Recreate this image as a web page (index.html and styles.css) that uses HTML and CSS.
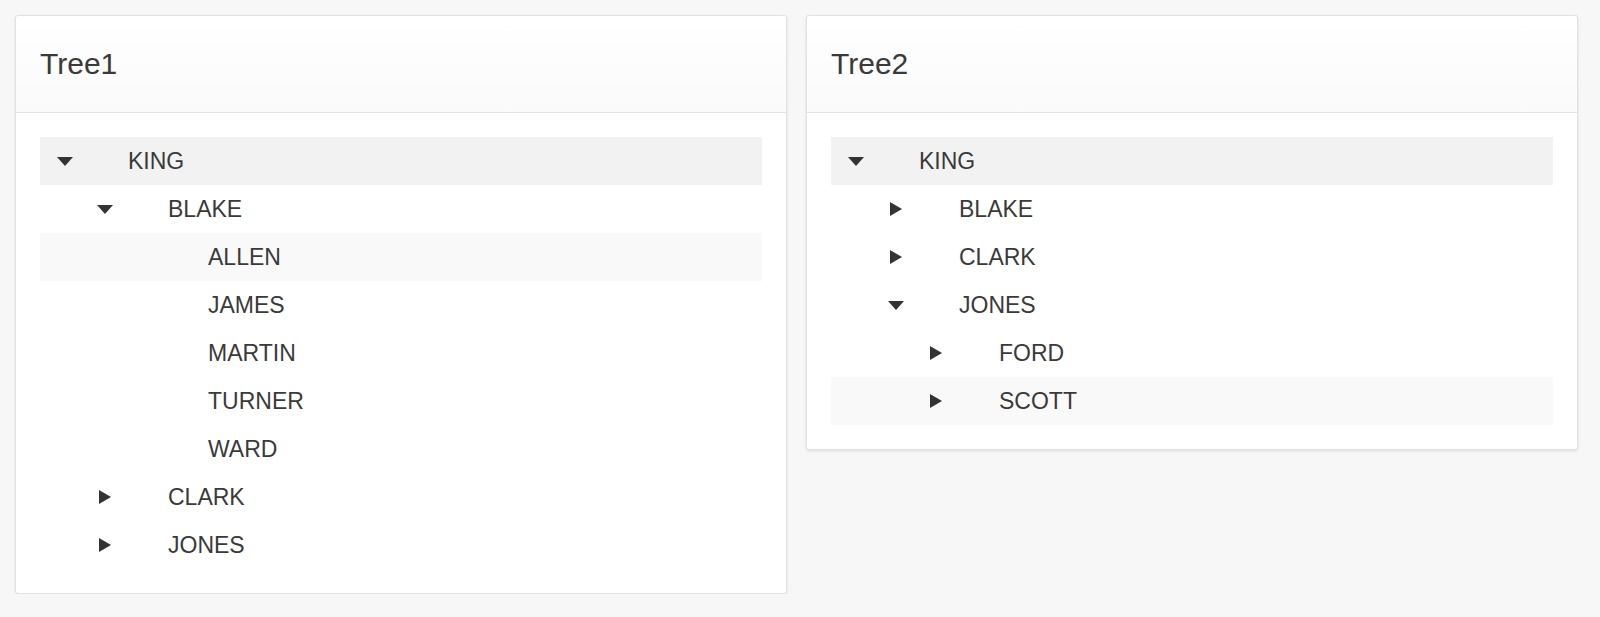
FILE: index.html
```html
<!DOCTYPE html>
<html lang="en">
<head>
    <meta charset="UTF-8">
    <meta name="viewport" content="width=device-width, initial-scale=1.0">
    <title>Trees</title>
    <link rel="stylesheet" href="styles.css">
</head>
<body>

    <!-- Tree 1 -->
    <div class="panel">
        <div class="panel-heading">Tree1</div>
        <div class="panel-body">
            <div class="node lvl-0 selected">
                <span class="toggle"><svg width="16" height="9" viewBox="0 0 16 9"><polygon points="0,0 16,0 8,9"/></svg></span>
                <span class="label">KING</span>
            </div>
            <div class="node lvl-1">
                <span class="toggle"><svg width="16" height="9" viewBox="0 0 16 9"><polygon points="0,0 16,0 8,9"/></svg></span>
                <span class="label">BLAKE</span>
            </div>
            <div class="node lvl-2 hover">
                <span class="toggle"></span>
                <span class="label">ALLEN</span>
            </div>
            <div class="node lvl-2">
                <span class="toggle"></span>
                <span class="label">JAMES</span>
            </div>
            <div class="node lvl-2">
                <span class="toggle"></span>
                <span class="label">MARTIN</span>
            </div>
            <div class="node lvl-2">
                <span class="toggle"></span>
                <span class="label">TURNER</span>
            </div>
            <div class="node lvl-2">
                <span class="toggle"></span>
                <span class="label">WARD</span>
            </div>
            <div class="node lvl-1">
                <span class="toggle"><svg width="12" height="14" viewBox="0 0 12 14"><polygon points="0,0 12,7 0,14"/></svg></span>
                <span class="label">CLARK</span>
            </div>
            <div class="node lvl-1">
                <span class="toggle"><svg width="12" height="14" viewBox="0 0 12 14"><polygon points="0,0 12,7 0,14"/></svg></span>
                <span class="label">JONES</span>
            </div>
        </div>
    </div>

    <!-- Tree 2 -->
    <div class="panel">
        <div class="panel-heading">Tree2</div>
        <div class="panel-body">
            <div class="node lvl-0 selected">
                <span class="toggle"><svg width="16" height="9" viewBox="0 0 16 9"><polygon points="0,0 16,0 8,9"/></svg></span>
                <span class="label">KING</span>
            </div>
            <div class="node lvl-1">
                <span class="toggle"><svg width="12" height="14" viewBox="0 0 12 14"><polygon points="0,0 12,7 0,14"/></svg></span>
                <span class="label">BLAKE</span>
            </div>
            <div class="node lvl-1">
                <span class="toggle"><svg width="12" height="14" viewBox="0 0 12 14"><polygon points="0,0 12,7 0,14"/></svg></span>
                <span class="label">CLARK</span>
            </div>
            <div class="node lvl-1">
                <span class="toggle"><svg width="16" height="9" viewBox="0 0 16 9"><polygon points="0,0 16,0 8,9"/></svg></span>
                <span class="label">JONES</span>
            </div>
            <div class="node lvl-2">
                <span class="toggle"><svg width="12" height="14" viewBox="0 0 12 14"><polygon points="0,0 12,7 0,14"/></svg></span>
                <span class="label">FORD</span>
            </div>
            <div class="node lvl-2 hover">
                <span class="toggle"><svg width="12" height="14" viewBox="0 0 12 14"><polygon points="0,0 12,7 0,14"/></svg></span>
                <span class="label">SCOTT</span>
            </div>
        </div>
    </div>

</body>
</html>
```

FILE: styles.css
```css
body {
    margin: 0;
    padding: 15px 22px 0 15px;
    display: flex;
    align-items: flex-start;
    gap: 19px;
    background-color: #f7f7f7;
    color: #333;
    font-family: "Liberation Sans", Arial, sans-serif;
}
.panel {
    flex: 1;
    background: white;
    border: 1px solid #e2e2e2;
    border-radius: 3px;
    box-shadow: 0 1px 3px rgba(0, 0, 0, 0.1);
}
.panel-heading {
    height: 96px;
    display: flex;
    align-items: center;
    padding: 0 24px;
    font-size: 30px;
    color: #3a3a3a;
    background: linear-gradient(#fff, #fafafa);
    border-bottom: 1px solid #e3e3e3;
    border-radius: 3px 3px 0 0;
}
.panel-body {
    padding: 24px;
}
.node {
    display: flex;
    align-items: center;
    height: 48px;
    font-size: 23px;
    color: #3a3a3a;
}
.node.selected { background: #f2f2f2; }
.node.hover { background: #f9f9f9; }
.lvl-1 { padding-left: 40px; }
.lvl-2 { padding-left: 80px; }
.toggle {
    width: 49px;
    display: flex;
    justify-content: center;
    align-items: center;
}
.toggle svg { fill: #333; }
.label {
    margin-left: 39px;
}
```
